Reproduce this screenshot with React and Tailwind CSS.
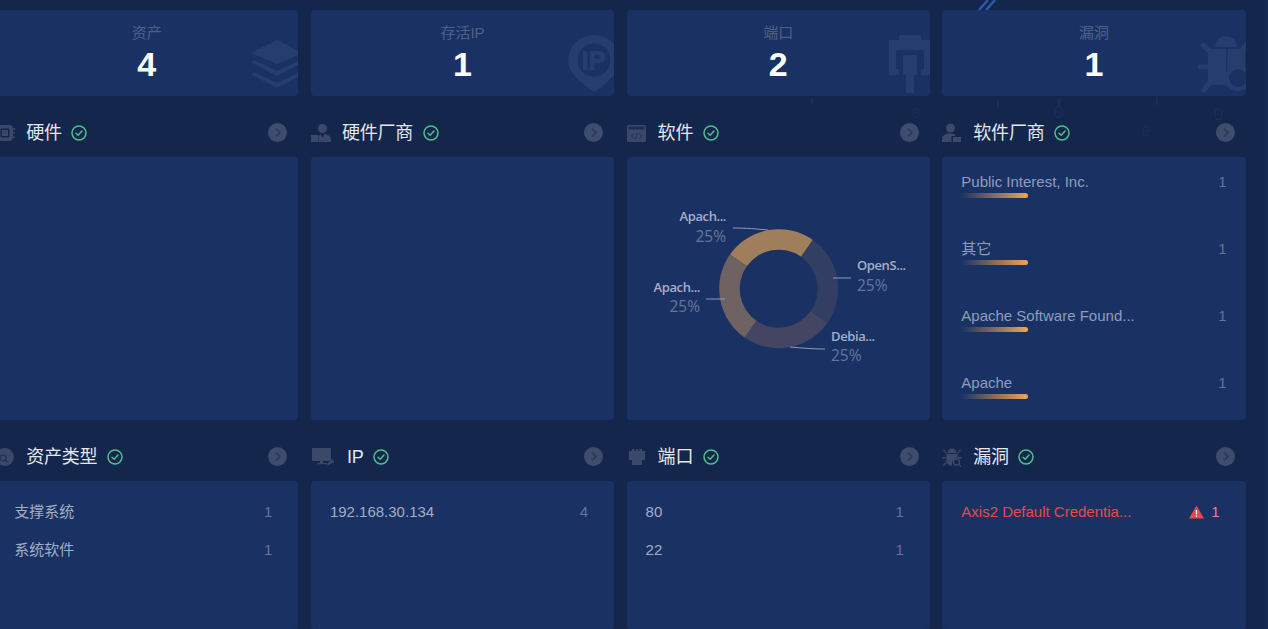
import React from "react";

const Check = () => (
  <svg width="16" height="16" viewBox="0 0 16 16" fill="none" className="shrink-0">
    <circle cx="8" cy="8" r="7" stroke="#4fc08d" strokeWidth="1.5" />
    <path d="M5 8.200 7.200 10.200 11 6" stroke="#4fc08d" strokeWidth="1.500" strokeLinecap="round" strokeLinejoin="round" />
  </svg>
);

const Arrow = () => (
  <svg width="19" height="19" viewBox="0 0 19 19" className="shrink-0">
    <circle cx="9.500" cy="9.500" r="9.500" fill="#3e4c6e" />
    <path d="M8 5.500 12 9.500 8 13.500" fill="none" stroke="#293857" strokeWidth="1.400" />
  </svg>
);

const c = "#3a4869";
const d = "#1d2d54";
const icons = {
  chip: (
    <svg width="20" height="20" viewBox="0 0 20 20" fill={c}>
      <path fillRule="evenodd" d="M6 2h8a4 4 0 0 1 4 4v8a4 4 0 0 1-4 4H6a4 4 0 0 1-4-4V6a4 4 0 0 1 4-4Zm.5 3.500a1 1 0 0 0-1 1v7a1 1 0 0 0 1 1h7a1 1 0 0 0 1-1v-7a1 1 0 0 0-1-1h-7Z" />
      <path d="M7 7h6v6H7zM0 5h2v1.500H0zM0 9.200h2v1.500H0zM0 13.500h2V15H0zM18 5h2v1.500h-2zM18 9.200h2v1.500h-2zM18 13.500h2V15h-2z" />
    </svg>
  ),
  vendor: (
    <svg width="20" height="19" viewBox="0 0 20 19" fill={c}>
      <circle cx="11.500" cy="4.500" r="4.500" />
      <path d="M8 18v-5C8 11.500 9 10.500 9.500 10L11.500 13.500l2-3.500c2.500.5 6.500 2 6.500 5v3Z" />
      <path d="M0 11h7.500v7H0z" />
    </svg>
  ),
  code: (
    <svg width="19" height="17" viewBox="0 0 19 17">
      <rect width="19" height="17" rx="1.500" fill={c} />
      <rect x="1.500" y="1.500" width="16" height="3" fill={d} />
      <path d="M6.500 8.500 4.500 11l2 2.500M12.500 8.500l2 2.500-2 2.500M10.500 8l-2 6" stroke={d} fill="none" strokeWidth="1" />
    </svg>
  ),
  person: (
    <svg width="20" height="20" viewBox="0 0 20 20" fill={c}>
      <circle cx="8.500" cy="5" r="4.500" />
      <path d="M0 19v-3c0-3.500 3.500-5.500 8.500-5.500 2 0 3.500.3 4.700.8V13H9.500v6Z" />
      <path d="M11 14h8v5h-8z" />
    </svg>
  ),
  pie: (
    <svg width="20" height="20" viewBox="0 0 20 20">
      <circle cx="10" cy="10" r="9" fill={c} />
      <circle cx="8" cy="11" r="3" fill="none" stroke={d} strokeWidth="1.200" />
      <path d="M10 13l3 2" stroke={d} strokeWidth="1.200" />
    </svg>
  ),
  monitor: (
    <svg width="24" height="20" viewBox="0 0 24 20" fill={c}>
      <path d="M1 1h19v13H1z" />
      <path d="M9 14h3v2H9zM6 16h10v1.200H6z" />
      <path d="m16 17 5-5 1 1-1 1 2 0 0 1.500-2 .5-4 2.500Z" />
    </svg>
  ),
  port: (
    <svg width="20" height="20" viewBox="0 0 20 20" fill={c}>
      <path d="M5 2h2.500v2H9V2h2v2h1.500V2H15v2h3v9H2V4h3Z" />
      <path d="M5 13h10v5H5z" />
    </svg>
  ),
  bug: (
    <svg width="20" height="20" viewBox="0 0 20 20" fill={c}>
      <path d="M5.500 6a4.500 4.500 0 0 1 9 0Z" />
      <path d="M4.500 7h11v4.500a6 6 0 0 0-5.500 7.500c-3 0-5.500-3-5.500-6Z" />
      <path d="M1 3.500 2 2.500 5 6 4 7ZM19 3.500 18 2.500 15 6l1 1ZM0 10h4v1.500H0ZM16 10h4v1.500h-4ZM1 18l3.500-4 1 1L2 19Z" />
      <circle cx="14.500" cy="15" r="3" fill="none" stroke={c} strokeWidth="1.300" />
      <path d="m16.500 17 2.500 2.500" stroke={c} strokeWidth="1.300" />
    </svg>
  ),
};

const w = "#253e6e";
const card = "#1a3263";
const watermarks = {
  layers: (
    <svg width="52" height="48" viewBox="0 0 52 48" fill={w}>
      <path d="M26 0 52 13 26 24 0 13Z" />
      <path d="M3 20 26 31 49 20l3 2.500L26 36 0 22.500Z" />
      <path d="M3 32 26 43 49 32l3 2.500L26 48 0 34.500Z" />
    </svg>
  ),
  pin: (
    <svg width="52" height="57" viewBox="0 0 52 57" fill={w}>
      <path fillRule="evenodd" d="M26 0a26 26 0 0 1 26 26c0 11-12 21-26 31C12 47 0 37 0 26A26 26 0 0 1 26 0Zm0 8.500a16.500 16.500 0 1 0 0 33 16.500 16.500 0 0 0 0-33Z" />
      <path d="M15 16h4.500v19H15ZM22 16h9.500a6 6 0 0 1 0 12H26.500v7H22Zm4.500 4v4h4a2 2 0 0 0 0-4Z" />
    </svg>
  ),
  plug: (
    <svg width="42" height="58" viewBox="0 0 42 58" fill={w}>
      <path fillRule="evenodd" d="M10 0h22v5h10v35H32V34h3V15H7v19h3v6H0V5h10Z" />
      <path d="M14 20h14v20h-3v18h-8V40h-3Z" />
    </svg>
  ),
  bug: (
    <svg width="51" height="58" viewBox="0 0 51 58" fill={w}>
      <path d="M18 12a11 11 0 0 1 22 0Z" />
      <path fillRule="evenodd" d="M11 14h37v36H11Zm18 0h1.500v38H29Z" />
      <path d="M6 10 14 18" stroke={w} strokeWidth="5" strokeLinecap="round" fill="none" />
      <path d="M3 32H12" stroke={w} strokeWidth="5" strokeLinecap="round" fill="none" />
      <path d="M7 55 15 45" stroke={w} strokeWidth="5" strokeLinecap="round" fill="none" />
      <path d="M49 10 44 16" stroke={w} strokeWidth="5" strokeLinecap="round" fill="none" />
      <circle cx="41" cy="43" r="11" fill={card} stroke={w} strokeWidth="4" />
    </svg>
  ),
};

const stats = [
  { t: "资产", n: 4, icon: "layers", pos: "top-[30px] -right-[5px]" },
  { t: "存活IP", n: 1, icon: "pin", pos: "top-[25px] -right-[6px]" },
  { t: "端口", n: 2, icon: "plug", pos: "top-[25px] -right-[1px]" },
  { t: "漏洞", n: 1, icon: "bug", pos: "top-[25px] -right-[2px]" },
];

function StatCard({ t, n, icon, pos }) {
  return (
    <div className="relative h-[86px] overflow-hidden rounded bg-[#1a3263] text-center">
      <div className="pt-[14px] text-[15px] leading-[18px] text-[#4f6088]">{t}</div>
      <div className="mt-[3px] text-[34px] font-bold leading-[38px] text-white">{n}</div>
      <div className={`absolute ${pos}`}>{watermarks[icon]}</div>
    </div>
  );
}

function Title({ icon, title, wide }) {
  return (
    <div className="flex h-[61px] items-center pr-[11px] pt-[13px]">
      <div className={`flex shrink-0 items-center ${wide ? "w-[36px]" : "w-[31px]"}`}>{icons[icon]}</div>
      <span className="text-lg leading-6 tracking-[-0.2px] text-[#e3e7ef]">{title}</span>
      <span className="ml-[9.500px]"><Check /></span>
      <span className="ml-auto -translate-y-[1px]"><Arrow /></span>
    </div>
  );
}

const Panel = ({ children, h }) => (
  <div className={`${h} overflow-hidden rounded bg-[#1a3263]`}>{children}</div>
);

function Donut() {
  const cx = 151.700;
  const cy = 131.700;
  const arc = (a, b, color) => {
    const R = 59.500, r = 39;
    const p = (rad, deg) => {
      const t = ((deg - 90) * Math.PI) / 180;
      return `${(cx + rad * Math.cos(t)).toFixed(2)} ${(cy + rad * Math.sin(t)).toFixed(2)}`;
    };
    return <path d={`M${p(R, a)}A${R} ${R} 0 0 1 ${p(R, b)}L${p(r, b)}A${r} ${r} 0 0 0 ${p(r, a)}Z`} fill={color} />;
  };
  const name = { fontSize: 13, fontWeight: 600, fill: "#a5aec6", fontFamily: '"Open Sans", sans-serif' };
  const pct = { fontSize: 15.500, fill: "#66759b", fontFamily: '"Open Sans", sans-serif' };
  const line = { fill: "none", stroke: "#8e9ab8", strokeWidth: 1 };
  const tight = { letterSpacing: "-0.4px" };
  return (
    <svg width="303" height="263" viewBox="0 0 303 263">
      {arc(305, 395, "#a07e5b")}
      {arc(35, 125, "#323f63")}
      {arc(125, 215, "#434562")}
      {arc(215, 305, "#6f6262")}
      <path d="M106 71C120 71 130 72 141 73" {...line} />
      <path d="M206 121h18" {...line} />
      <path d="M163 190c12 1 22 2 35 2" {...line} />
      <path d="M79 142H98" {...line} />
      <text x="99" y="64" textAnchor="end" {...name} style={tight}>Apach...</text>
      <text x="99" y="85" textAnchor="end" {...pct}>25%</text>
      <text x="230" y="113" {...name} style={tight}>OpenS...</text>
      <text x="230" y="134" {...pct}>25%</text>
      <text x="73" y="135" textAnchor="end" {...name} style={tight}>Apach...</text>
      <text x="73" y="155" textAnchor="end" {...pct}>25%</text>
      <text x="204" y="184" {...name} style={tight}>Debia...</text>
      <text x="204" y="204" {...pct}>25%</text>
    </svg>
  );
}

const vendors = ["Public Interest, Inc.", "其它", "Apache Software Found...", "Apache"];

function Vendors() {
  return (
    <div className="pt-[14px]">
      {vendors.map((v) => (
        <div key={v} className="h-[67px] pl-[19px] pr-[19px]">
          <div className="flex items-center justify-between text-[15px] leading-[21px] text-[#8f9cbc]">
            <span>{v}</span>
            <span className="text-[#64739a]">1</span>
          </div>
          <div className="mt-[1px] h-[5px] w-[67px] rounded-r-full bg-gradient-to-r from-[#f0a555]/0 to-[#f0a555]" />
        </div>
      ))}
    </div>
  );
}

function List({ rows }) {
  return (
    <div className="pt-[12px]">
      {rows.map(([a, b]) => (
        <div key={a} className="flex h-[38px] items-center justify-between pl-[19px] pr-[26px] text-[15px] text-[#a3adc6]">
          <span>{a}</span>
          <span className="text-[#64739a]">{b}</span>
        </div>
      ))}
    </div>
  );
}

function Bg() {
  return (
    <svg className="pointer-events-none absolute left-0 top-0" width="1268" height="629" viewBox="0 0 1268 629">
      <path d="M979 10 988 0M986 10 995 0" stroke="#2c5aa8" strokeWidth="2.500" />
      <g fill="#182c55" fontSize="18" fontFamily="Liberation Mono, monospace">
        <text x="1053" y="118">0</text>
        <text x="1213" y="120">0</text>
        <text x="1142" y="136" fontSize="14">0</text>
        <text x="912" y="118" fontSize="14">0</text>
      </g>
      <path d="M998 100v8M1157 97v8M1059 98v8M812 98v6" stroke="#1a2f58" strokeWidth="2" />
    </svg>
  );
}

export default function App() {
  return (
    <div className="relative h-[629px] w-[1268px] overflow-hidden bg-[#14264b] font-['Liberation_Sans','Noto_Sans_CJK_SC',sans-serif]">
      <Bg />
      <div className="absolute right-0 top-0 h-full w-[3px] bg-[#172a50]" />
      <div className="relative ml-[-4.800px] w-[1250.300px] pt-[10px]">
        <div className="grid grid-cols-4 gap-x-[12.500px]">
          {stats.map((s) => <StatCard key={s.t} {...s} />)}
        </div>
        <div className="grid grid-cols-4 gap-x-[12.500px]">
          <div><Title icon="chip" title="硬件" /><Panel h="h-[263px]" /></div>
          <div><Title icon="vendor" title="硬件厂商" /><Panel h="h-[263px]" /></div>
          <div><Title icon="code" title="软件" /><Panel h="h-[263px]"><Donut /></Panel></div>
          <div><Title icon="person" title="软件厂商" /><Panel h="h-[263px]"><Vendors /></Panel></div>
        </div>
        <div className="grid grid-cols-4 gap-x-[12.500px]">
          <div>
            <Title icon="pie" title="资产类型" />
            <Panel h="h-[148px]"><List rows={[["支撑系统", 1], ["系统软件", 1]]} /></Panel>
          </div>
          <div>
            <Title icon="monitor" title="IP" wide />
            <Panel h="h-[148px]"><List rows={[["192.168.30.134", 4]]} /></Panel>
          </div>
          <div>
            <Title icon="port" title="端口" />
            <Panel h="h-[148px]"><List rows={[["80", 1], ["22", 1]]} /></Panel>
          </div>
          <div>
            <Title icon="bug" title="漏洞" />
            <Panel h="h-[148px]">
              <div className="mt-[12px] flex h-[38px] items-center pl-[19px] pr-[26px] text-[15px] text-[#e5484d]">
                <span>Axis2 Default Credentia...</span>
                <svg width="15" height="14" viewBox="0 0 15 14" className="ml-auto">
                  <path d="M7.500 0.500 15 13.500H0Z" fill="#e5484d" />
                  <path d="M6.900 5h1.200v4.500H6.900ZM6.900 10.500h1.200v1.500H6.900Z" fill="#fff" />
                </svg>
                <span className="ml-[7px] text-[#d98a94]">1</span>
              </div>
            </Panel>
          </div>
        </div>
      </div>
    </div>
  );
}
